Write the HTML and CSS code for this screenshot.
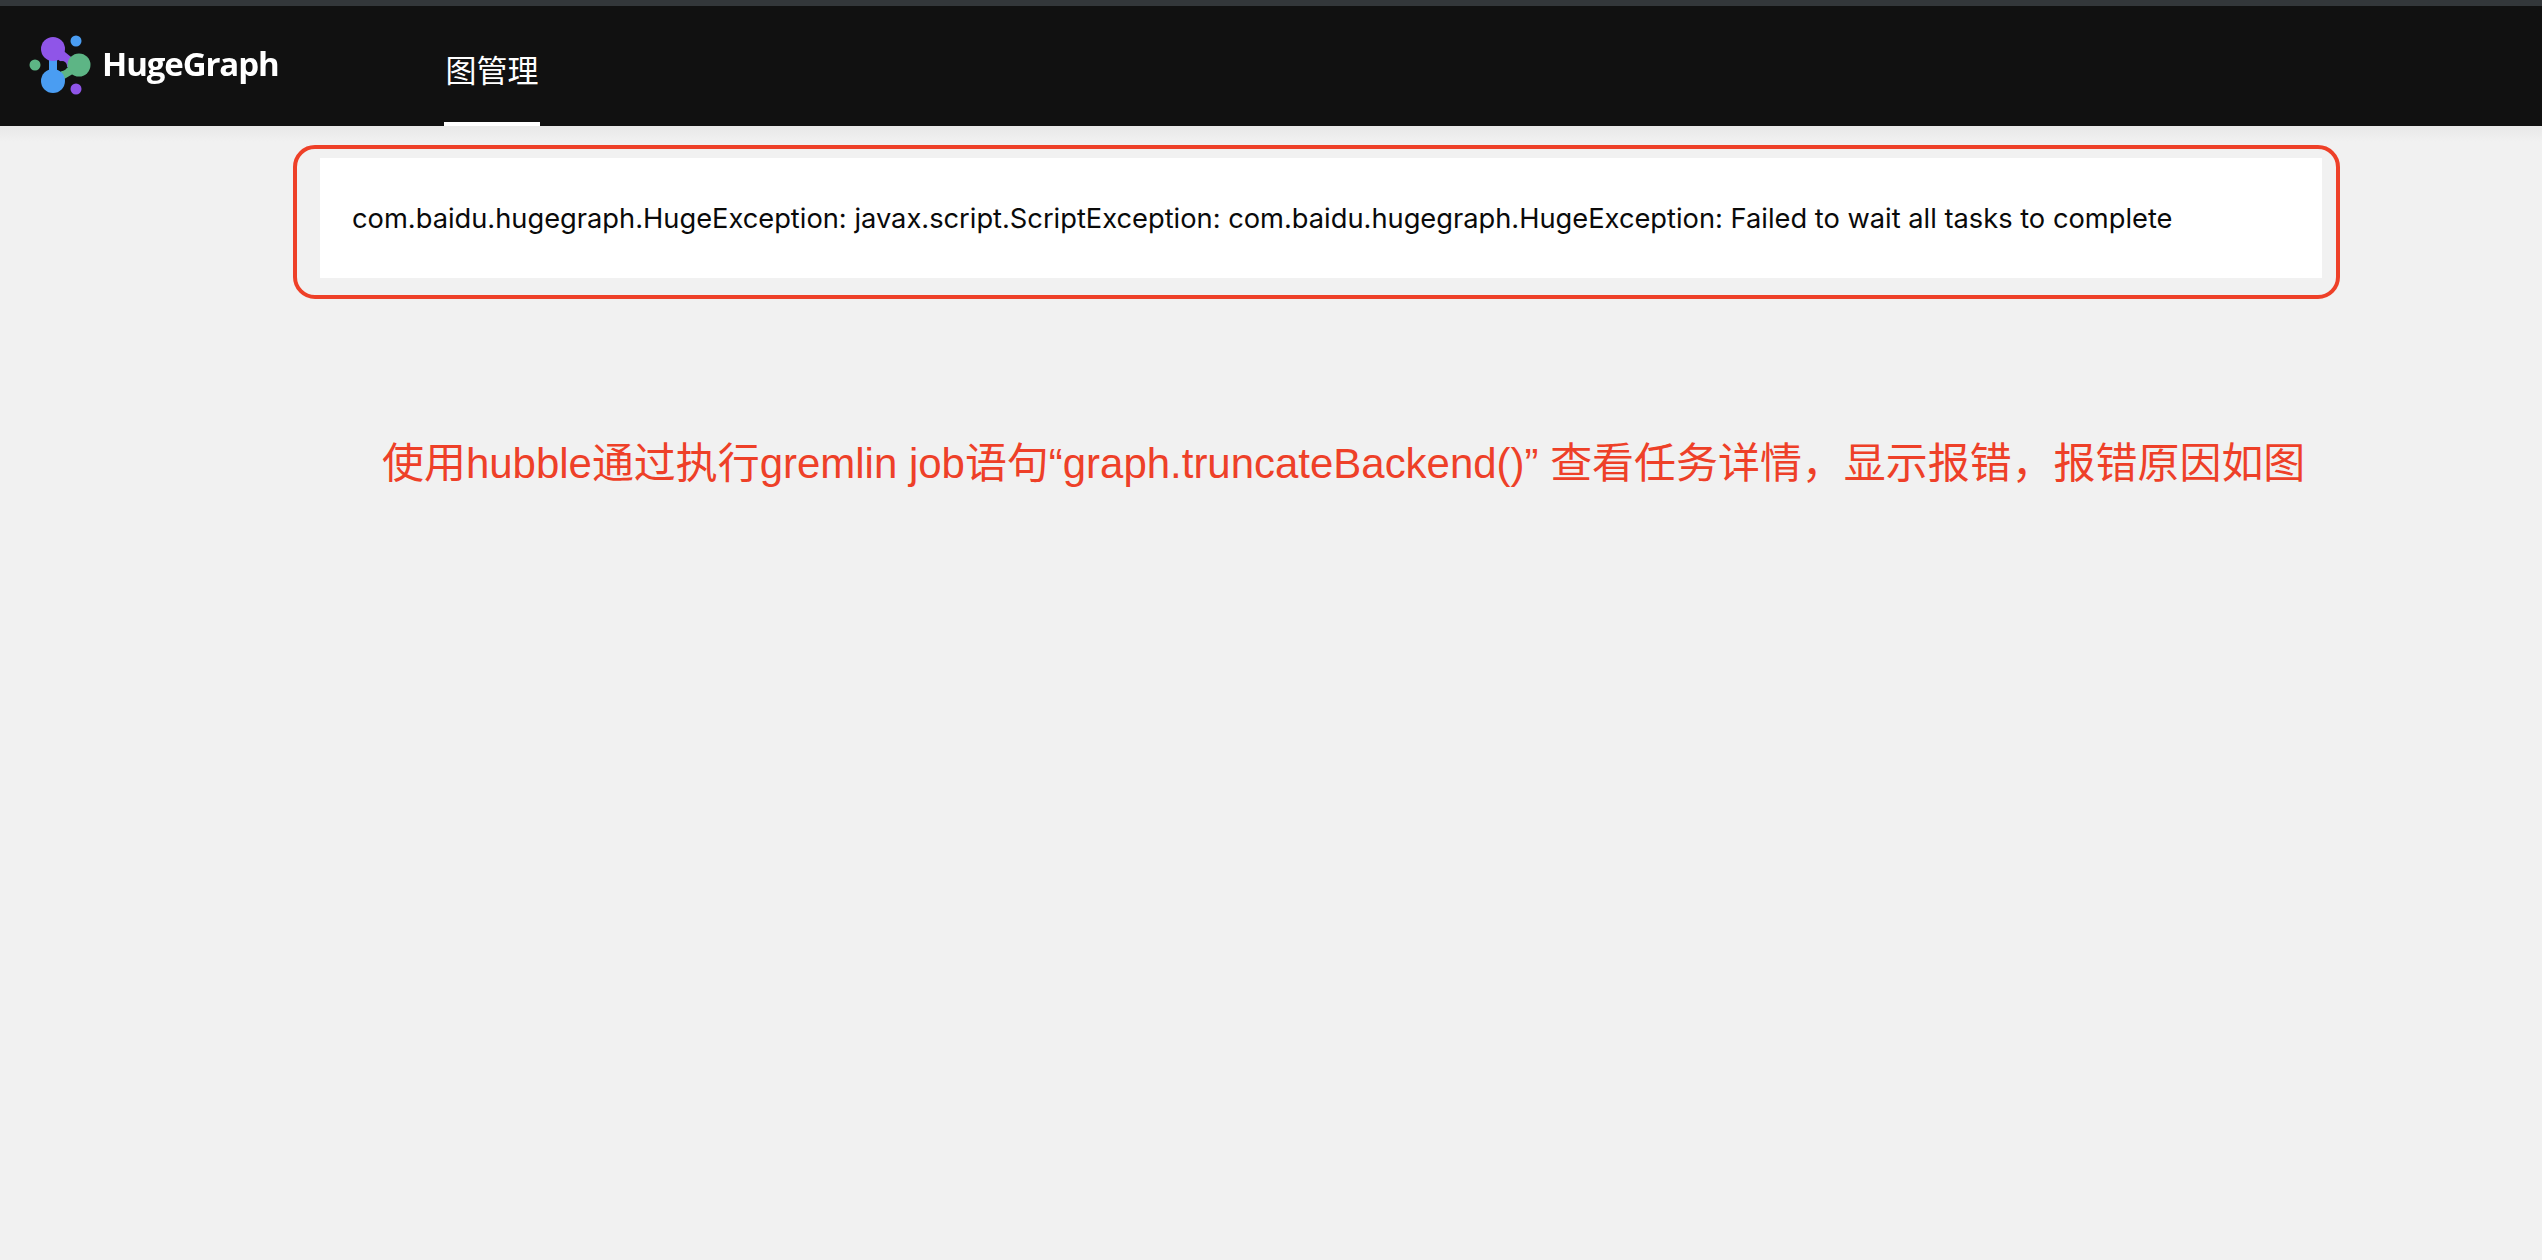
FILE: index.html
```html
<!DOCTYPE html>
<html lang="zh-CN">
<head>
    <meta charset="UTF-8">
    <meta name="viewport" content="width=device-width, initial-scale=1.0">
    <title>HugeGraph</title>
    <link rel="stylesheet" href="styles.css">
</head>
<body>
    <div class="top-strip"></div>
    <div class="header">
        <div class="logo">
            <svg class="logo-mark" width="62" height="60" viewBox="0 0 62 60">
                <path d="M24 14 L44 30" stroke="#8f55e8" stroke-width="10" fill="none"/>
                <path d="M24 14 L24 46" stroke="#4a9df2" stroke-width="8" fill="none"/>
                <path d="M24 46 L51 30" stroke="#5db585" stroke-width="8" fill="none"/>
                <circle cx="24" cy="14" r="12" fill="#8f55e8"/>
                <circle cx="24" cy="46" r="12" fill="#4a9df2"/>
                <circle cx="50" cy="30" r="11.5" fill="#5db585"/>
                <circle cx="33" cy="31" r="5" fill="#111"/>
                <circle cx="47" cy="6" r="5.5" fill="#4a9df2"/>
                <circle cx="6" cy="30" r="5.5" fill="#5db585"/>
                <circle cx="47" cy="54" r="5.5" fill="#8f55e8"/>
            </svg>
            <span class="logo-text">HugeGraph</span>
        </div>
        <div class="tab">图管理</div>
    </div>
    <div class="content">
        <div class="error-outline">
            <div class="error-card">com.baidu.hugegraph.HugeException: javax.script.ScriptException: com.baidu.hugegraph.HugeException: Failed to wait all tasks to complete</div>
        </div>
        <p class="note">使用hubble通过执行gremlin job语句“graph.truncateBackend()” 查看任务详情，显示报错，报错原因如图</p>
    </div>
</body>
</html>
```

FILE: styles.css
```css
body {
    margin: 0;
    min-height: 100vh;
    background-color: #f1f1f1;
    font-family: "Inter", "Noto Sans CJK SC", sans-serif;
}
.top-strip {
    height: 6px;
    background-color: #33373a;
}
.header {
    display: flex;
    height: 120px;
    background-color: #111;
}
.logo {
    display: flex;
    align-items: center;
    gap: 11px;
    width: 415px;
    height: 60px;
    margin: 29px 0 0 29px;
    filter: blur(0.7px);
}
.logo-mark {
    flex: none;
}
.logo-text {
    margin-top: -3px;
    color: #fff;
    font-family: "Open Sans", sans-serif;
    font-size: 33px;
    font-weight: 700;
    letter-spacing: -1.1px;
}
.tab {
    display: flex;
    justify-content: center;
    align-items: center;
    box-sizing: border-box;
    width: 96px;
    padding-top: 9px;
    border-bottom: 4px solid #fff;
    color: #fff;
    font-family: "Noto Sans CJK SC", sans-serif;
    font-size: 31px;
    font-weight: 400;
}
.content {
    padding: 19px 0 0 293px;
    background: linear-gradient(#e8e8e8, #f1f1f1 16px) no-repeat;
}
.error-outline {
    box-sizing: border-box;
    width: 2047px;
    height: 154px;
    padding: 9px 14px 9px 23px;
    border: 4px solid #ee4028;
    border-radius: 22px;
}
.error-card {
    box-sizing: border-box;
    height: 120px;
    padding: 2px 0 0 32px;
    background-color: #fff;
    color: #0a0a0a;
    font-size: 27.28px;
    line-height: 118px;
    white-space: nowrap;
}
.note {
    margin: 133px 0 0 89px;
    color: #ee4028;
    font-family: "Liberation Sans", "Noto Sans CJK SC", sans-serif;
    font-size: 41.96px;
    line-height: 64px;
    white-space: nowrap;
}
```
